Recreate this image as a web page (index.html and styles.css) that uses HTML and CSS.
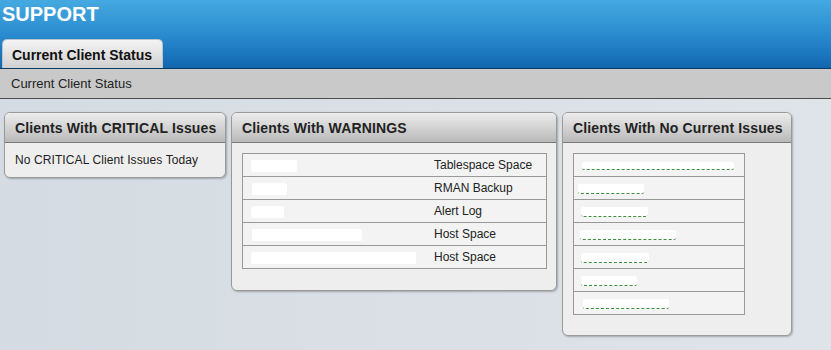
FILE: index.html
```html
<!DOCTYPE html>
<html lang="en">
<head>
  <meta charset="UTF-8">
  <title>Support - Current Client Status</title>
  <link rel="stylesheet" href="styles.css">
</head>
<body>
  <!-- Top header with tab -->
  <div class="header">
    <div class="title">SUPPORT</div>
    <div class="tabs">
      <div class="tab active">Current Client Status</div>
    </div>
  </div>
  <div class="subbar">Current Client Status</div>

  <div class="content">
    <!-- Critical -->
    <div class="panel panel-critical">
      <div class="panel-head">Clients With CRITICAL Issues</div>
      <div class="panel-body">No CRITICAL Client Issues Today</div>
    </div>

    <!-- Warnings -->
    <div class="panel panel-warnings">
      <div class="panel-head">Clients With WARNINGS</div>
      <div class="panel-body">
        <table class="status-table">
          <tr><td class="client"><span class="blob" style="width:46px;margin-left:2px"></span></td><td>Tablespace Space</td></tr>
          <tr><td class="client"><span class="blob" style="width:35px;margin-left:3px"></span></td><td>RMAN Backup</td></tr>
          <tr><td class="client"><span class="blob" style="width:33px;margin-left:2px"></span></td><td>Alert Log</td></tr>
          <tr><td class="client"><span class="blob" style="width:110px;margin-left:3px"></span></td><td>Host Space</td></tr>
          <tr><td class="client"><span class="blob" style="width:165px;margin-left:2px"></span></td><td>Host Space</td></tr>
        </table>
      </div>
    </div>

    <!-- No issues -->
    <div class="panel panel-ok">
      <div class="panel-head">Clients With No Current Issues</div>
      <div class="panel-body">
        <table class="status-table ok-table">
          <tr><td><span class="blob ok thin" style="width:152px;margin-left:4px"></span></td></tr>
          <tr><td><span class="blob ok" style="width:66px;margin-left:0"></span></td></tr>
          <tr><td><span class="blob ok" style="width:67px;margin-left:3px"></span></td></tr>
          <tr><td><span class="blob ok" style="width:96px;margin-left:2px"></span></td></tr>
          <tr><td><span class="blob ok" style="width:68px;margin-left:3px"></span></td></tr>
          <tr><td><span class="blob ok" style="width:56px;margin-left:3px"></span></td></tr>
          <tr><td><span class="blob ok" style="width:86px;margin-left:5px"></span></td></tr>
        </table>
      </div>
    </div>
  </div>
</body>
</html>
```

FILE: styles.css
```css
body {
  margin: 0;
  font-family: "Liberation Sans", Arial, sans-serif;
  color: #222;
  background: linear-gradient(to right, #d4dbe2, #dfe4e9);
  min-height: 350px;
}

.header {
  height: 68px;
  background: linear-gradient(to bottom, #45a9e1, #2a8ccf 50%, #1166b0);
  border-bottom: 1px solid #0b3b5e;
  display: flex;
  flex-direction: column;
  justify-content: space-between;
}

.title {
  color: #fff;
  font-size: 20px;
  font-weight: bold;
  padding: 3px 0 0 2px;
  line-height: 22px;
}

.tabs {
  display: flex;
  padding-left: 2px;
}

.tab {
  width: 161px;
  height: 29px;
  line-height: 31px;
  padding-left: 9px;
  box-sizing: border-box;
  font-size: 14px;
  font-weight: bold;
  color: #111;
  background: linear-gradient(to bottom, #f4f4f4, #d0d0d0);
  border: 1px solid #b8c4cc;
  border-bottom: none;
  border-radius: 5px 5px 0 0;
}

.subbar {
  height: 29px;
  line-height: 30px;
  padding-left: 11px;
  font-size: 13px;
  color: #222;
  background: #c9c9c9;
  border-bottom: 1px solid #4e4e4e;
}

.content {
  display: flex;
  align-items: flex-start;
  gap: 5px;
  padding: 13px 0 0 4px;
}

.panel {
  background: #eeeeee;
  border: 1px solid #9a9a9a;
  border-radius: 6px;
  box-shadow: 1px 1px 2px rgba(0, 0, 0, 0.25);
  box-sizing: border-box;
  overflow: hidden;
}

.panel-critical { width: 222px; }
.panel-warnings { width: 326px; }
.panel-ok { width: 230px; }

.panel-head {
  height: 29px;
  line-height: 30px;
  padding-left: 10px;
  font-size: 14px;
  font-weight: bold;
  letter-spacing: 0.15px;
  color: #222;
  background: linear-gradient(to bottom, #ececec, #c4c4c4 80%, #b8b8b8);
  border-bottom: 1px solid #7a7a7a;
}

.panel-body {
  font-size: 12px;
  padding: 10px 10px 21px 10px;
}

.panel-critical .panel-body {
  padding: 10px 10px 10px 10px;
  line-height: 14px;
  letter-spacing: 0.1px;
}

.panel-ok .panel-body {
  padding-bottom: 20px;
}

.status-table {
  border-collapse: collapse;
  background: #f3f3f3;
  font-size: 12px;
  color: #222;
}

.panel-warnings .status-table { width: 305px; }
.ok-table { width: 172px; }

.status-table td {
  border: 1px solid #999;
  height: 22px;
  padding: 0 6px;
  vertical-align: middle;
}

.status-table td.client {
  width: 179px;
  border-right: none;
  padding: 0 0 0 6px;
}

.status-table td.client + td {
  border-left: none;
}

.blob {
  display: inline-block;
  height: 12px;
  background: #fff;
  vertical-align: middle;
  border-radius: 2px;
}

.blob.ok {
  height: 9px;
  border-bottom: 1px dashed #3d8f3d;
}

.blob.thin {
  height: 7px;
}

.ok-table td {
  padding: 0 4px;
}
```
